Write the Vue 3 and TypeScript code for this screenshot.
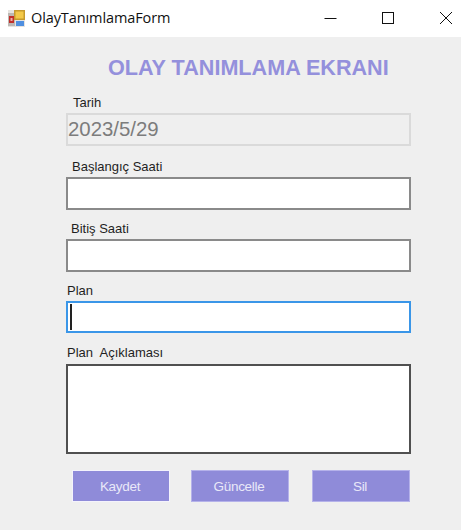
<script setup lang="ts">
const buttons: { label: string; cls: string }[] = [
  { label: 'Kaydet', cls: 'btn first' },
  { label: 'Güncelle', cls: 'btn' },
  { label: 'Sil', cls: 'btn last' },
]
</script>

<template>
  <div class="win">
    <header class="titlebar">
      <svg class="appicon" width="17" height="17" viewBox="0 0 17 17">
        <rect x="0" y="0" width="17" height="17" fill="#e6e3df" />
        <rect x="0" y="3" width="7" height="13" fill="#bdb8b4" />
        <rect x="1" y="6" width="5" height="7" fill="#c22f2a" />
        <rect x="2.5" y="8" width="2" height="3" fill="#ecb0a8" />
        <rect x="6" y="0" width="11" height="10" fill="#c79a2c" />
        <rect x="7.5" y="1.5" width="8" height="7" fill="#f4c948" />
        <rect x="8" y="11" width="8" height="5" fill="#4f8fe0" />
      </svg>
      <span class="wintitle">OlayTanımlamaForm</span>
      <div class="controls">
        <svg width="14" height="14" viewBox="0 0 14 14"><path d="M1.5 7.5h12" stroke="#111" fill="none" /></svg>
        <svg width="14" height="14" viewBox="0 0 14 14"><rect x="1.5" y="1.5" width="11" height="11" stroke="#111" fill="none" /></svg>
        <svg width="14" height="14" viewBox="0 0 14 14"><path d="M1 1l12 12M13 1L1 13" stroke="#111" fill="none" /></svg>
      </div>
    </header>

    <main class="form">
      <h1 class="heading">OLAY TANIMLAMA EKRANI</h1>

      <label class="lab tarih">Tarih</label>
      <div class="box disabled">2023/5/29</div>

      <label class="lab bas">Başlangıç Saati</label>
      <div class="box"></div>

      <label class="lab bit">Bitiş Saati</label>
      <div class="box"></div>

      <label class="lab plan">Plan</label>
      <div class="box focus"><span class="caret"></span></div>

      <label class="lab acik">Plan&nbsp; Açıklaması</label>
      <div class="box area"></div>

      <div class="actions">
        <button v-for="b in buttons" :key="b.label" :class="b.cls">{{ b.label }}</button>
      </div>
    </main>
  </div>
</template>

<style>
html, body { margin: 0; background: #efefef; }
</style>

<style scoped>
.win {
  width: 461px;
  height: 530px;
  background: #efefef;
  font-family: "Liberation Sans", Arial, sans-serif;
  overflow: hidden;
}
.titlebar {
  height: 37px;
  background: #fff;
  display: flex;
  align-items: center;
  padding-left: 8px;
}
.appicon { margin-right: 6px; margin-top: -1px; flex: none; }
.wintitle { font-size: 14.5px; color: #111; font-family: "Open Sans", "Liberation Sans", sans-serif; margin-top: -2px; letter-spacing: -0.1px; }
.controls {
  margin-left: auto;
  margin-right: 8px;
  display: flex;
  gap: 44px;
  margin-top: -2px;
}
.form {
  padding-left: 66px;
  width: 345px;
  display: flex;
  flex-direction: column;
}
.heading {
  margin: 18px 0 0 42px;
  font-size: 21.6px;
  line-height: 25px;
  font-weight: bold;
  color: #9490dc;
  white-space: nowrap;
}
.lab {
  font-size: 13px;
  line-height: 15px;
  color: #1f1f1f;
  display: block;
}
.tarih { margin: 15px 0 3px 7px; }
.bas { margin: 13px 0 3px 6px; }
.bit { margin: 11px 0 3px 5px; }
.plan { margin: 11px 0 3px 1px; }
.acik { margin: 12px 0 4px 1px; }
.box {
  box-sizing: border-box;
  height: 33px;
  background: #fff;
  border: 2px solid #8a8a8a;
}
.box.disabled {
  background: #efefef;
  border-color: #dadada;
  color: #7c7c7c;
  font-size: 20.4px;
  line-height: 29px;
}
.box.focus {
  height: 32px;
  border-color: #3a96e8;
  padding: 1px 0 0 2px;
}
.caret {
  display: block;
  width: 2px;
  height: 26px;
  background: #222;
}
.box.area {
  height: 90px;
  border-color: #505050;
}
.actions {
  display: flex;
  gap: 21px;
  margin: 16px 0 0 6px;
}
.btn {
  flex: none;
  width: 98px;
  height: 32px;
  box-sizing: border-box;
  background: #8f8bd9;
  border: 1px solid #b5b2ea;
  color: #e9e8f8;
  font-family: inherit;
  font-size: 13.5px;
  letter-spacing: -0.3px;
  padding: 0 2px 0 0;
}
.btn.first { border-color: #f4f3fc; }
.btn.last { margin-left: 2px; }
</style>
